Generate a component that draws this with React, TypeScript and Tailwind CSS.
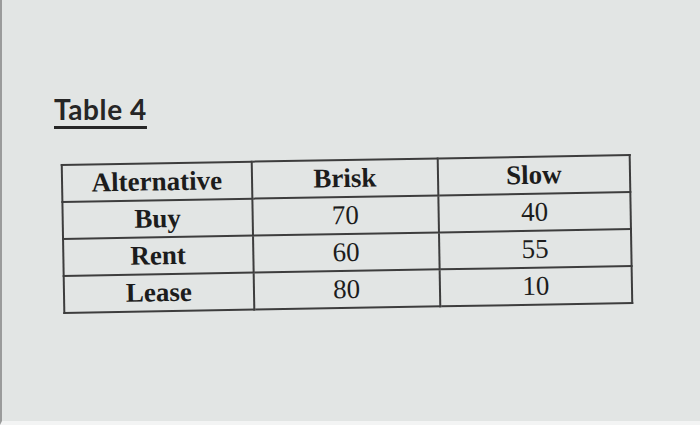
const rows = [
  { name: "Buy", brisk: "70", slow: "40" },
  { name: "Rent", brisk: "60", slow: "55" },
  { name: "Lease", brisk: "80", slow: "10" },
];

export default function App() {
  return (
    <div className="h-[425px] w-[700px] overflow-hidden border-l-2 border-b-4 border-l-[#9a9b9b] border-b-[#f3f4f4] bg-[#e2e5e4]">
      <div className="pl-[52px] pt-[93px]">
        <h1 className="font-['Lato',sans-serif] text-[28px] leading-[33px] font-bold tracking-[0.6px] text-[#262626] underline decoration-[3px] underline-offset-[6px]">
          Table 4
        </h1>
      </div>
      <div className="mt-[33px] ml-[60px] w-[570px] -rotate-1">
        <table className="w-full border-collapse font-['Liberation_Serif',serif] text-[27px] leading-[35px] text-[#1c1c1c]">
          <colgroup>
            <col className="w-[190px]" />
            <col className="w-[187px]" />
            <col className="w-[193px]" />
          </colgroup>
          <thead>
            <tr>
              <th className="border-2 border-[#3d3d3d] text-center font-bold">Alternative</th>
              <th className="border-2 border-[#3d3d3d] text-center font-bold">Brisk</th>
              <th className="border-2 border-[#3d3d3d] text-center font-bold">Slow</th>
            </tr>
          </thead>
          <tbody>
            {rows.map((r) => (
              <tr key={r.name}>
                <td className="border-2 border-[#3d3d3d] text-center font-bold">{r.name}</td>
                <td className="border-2 border-[#3d3d3d] text-center">{r.brisk}</td>
                <td className="border-2 border-[#3d3d3d] text-center">{r.slow}</td>
              </tr>
            ))}
          </tbody>
        </table>
      </div>
    </div>
  );
}
